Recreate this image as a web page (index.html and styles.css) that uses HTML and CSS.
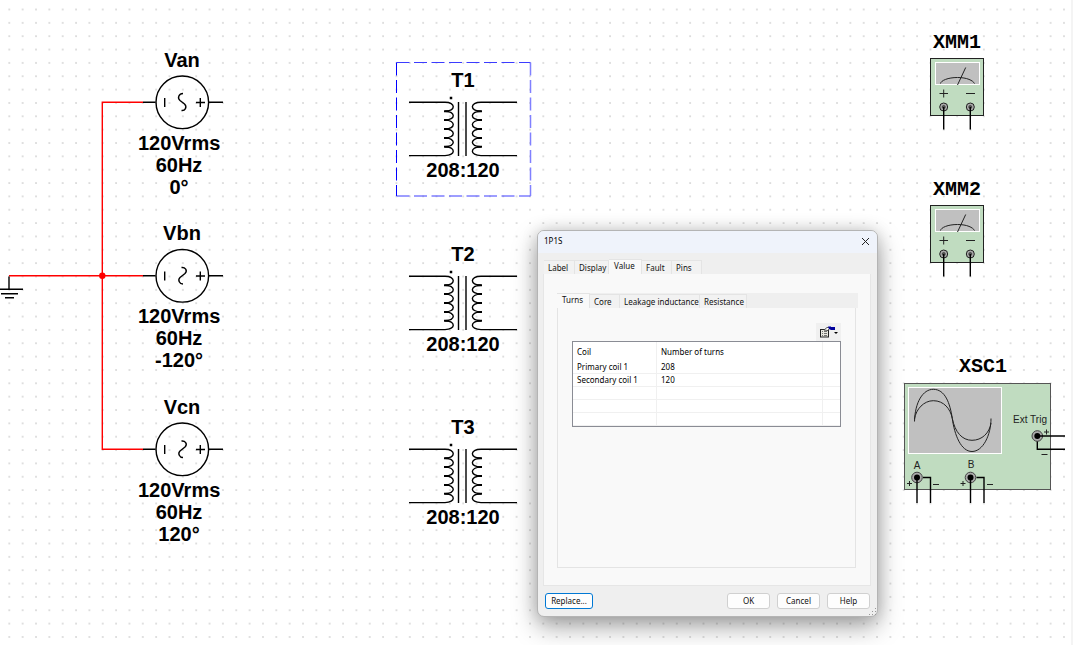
FILE: index.html
```
<!DOCTYPE html>
<html lang="en">
<head>
    <meta charset="utf-8">
    <title>Three phase transformer</title>
    <link rel="stylesheet" href="styles.css">
</head>
<body>
    <main class="sheet">
        <!-- grid dots and wires -->
        <svg class="wires" aria-hidden="true">
            <defs>
                <pattern id="grid" x="2.6" y="2.8" width="13.35" height="13.35" patternUnits="userSpaceOnUse">
                    <rect x="6.2" y="6.2" width="1" height="1" fill="#888"/>
                </pattern>
            </defs>
            <rect width="100%" height="100%" fill="url(#grid)"/>
            <g fill="none" stroke="#f00" stroke-width="1.4">
                <path d="M143 102.3H102.3V449.3H143"/>
                <path d="M9 275.8H143"/>
            </g>
            <circle cx="102.3" cy="275.8" r="3.2" fill="#f00"/>
            <path d="M9 276.5V289M0 289.3H23M1 293.8H18M5 297.8H14" fill="none" stroke="#000" stroke-width="1.4"/>
        </svg>

        <!-- AC sources -->
        <figure class="part source van">
            <figcaption>Van</figcaption>
            <svg width="88" height="61" fill="none" stroke="#000" stroke-width="1.4">
                <path d="M5 31.3H17.5M70.5 31.3H85"/>
                <circle cx="44.3" cy="31.3" r="26.3"/>
                <path d="M26.7 27V36M58 31.5H67M62.3 27V36"/>
                <path d="M45 22.5C41 22.5 39 27 42 29.5L46.5 33C49.5 36 47 40 43.5 39.5"/>
            </svg>
            <div class="values">120Vrms<br>60Hz<br>0°</div>
        </figure>
        <figure class="part source vbn">
            <figcaption>Vbn</figcaption>
            <svg width="88" height="61" fill="none" stroke="#000" stroke-width="1.4">
                <path d="M5 31.8H17.5M70.5 31.8H85"/>
                <circle cx="44.3" cy="31.8" r="26.3"/>
                <path d="M26.7 27.5V36.5M58 32H67M62.3 27.5V36.5"/>
                <path d="M43.5 23.5C47 23 50 26.5 47 29.5L42 33.5C39.5 36 41.5 40 45 40"/>
            </svg>
            <div class="values">120Vrms<br>60Hz<br>-120°</div>
        </figure>
        <figure class="part source vcn">
            <figcaption>Vcn</figcaption>
            <svg width="88" height="61" fill="none" stroke="#000" stroke-width="1.4">
                <path d="M5 31.3H17.5M70.5 31.3H85"/>
                <circle cx="44.3" cy="31.3" r="26.3"/>
                <path d="M26.7 27V36M58 31.5H67M62.3 27V36"/>
                <path d="M43.5 23C47 22.5 50 26 47 29L42 33C39.5 35.5 41.5 39.5 45 39.5"/>
            </svg>
            <div class="values">120Vrms<br>60Hz<br>120°</div>
        </figure>

        <!-- transformers -->
        <svg class="selection" width="136" height="136" fill="none" stroke-dasharray="13 4.5">
            <path d="M.5 .5V134" stroke="#00f"/>
            <path d="M.5 .5H134.5M.5 134H134.5" stroke="#3c3cff"/>
            <path d="M134.5 .5V134" stroke="#8080ff" stroke-width="1.5"/>
        </svg>
        <figure class="part transformer t1">
            <figcaption>T1</figcaption>
            <svg width="108" height="68">
                <defs>
                    <g id="coils" fill="none" stroke="#000" stroke-width="1.4">
                        <path d="M0 11.3H36C47 11.3 47 20.2 36 20.2C47 20.2 47 29.1 36 29.1C47 29.1 47 38 36 38C47 38 47 46.9 36 46.9C47 46.9 47 55.8 36 55.8C47 55.8 47 64.6 36 64.6H0"/>
                        <path d="M108 11.3H72C60.5 11.3 60.5 20.2 72 20.2C60.5 20.2 60.5 29.1 72 29.1C60.5 29.1 60.5 38 72 38C60.5 38 60.5 46.9 72 46.9C60.5 46.9 60.5 55.8 72 55.8C60.5 55.8 60.5 64.6 72 64.6H108"/>
                        <path d="M49.5 11V65M57 11V65"/>
                        <path d="M35 20.2H40M35 29.1H40M35 38H40M35 46.9H40M35 55.8H40M68 20.2H73M68 29.1H73M68 38H73M68 46.9H73M68 55.8H73" stroke-width="2"/>
                        <rect x="41" y="6" width="2" height="2" fill="#000" stroke-width=".5"/>
                    </g>
                </defs>
                <use href="#coils"/>
            </svg>
            <div>208:120</div>
        </figure>
        <figure class="part transformer t2">
            <figcaption>T2</figcaption>
            <svg width="108" height="68"><use href="#coils"/></svg>
            <div>208:120</div>
        </figure>
        <figure class="part transformer t3">
            <figcaption>T3</figcaption>
            <svg width="108" height="68"><use href="#coils"/></svg>
            <div>208:120</div>
        </figure>

        <!-- instruments -->
        <figure class="part meter xmm1">
            <figcaption>XMM1</figcaption>
            <svg width="54" height="72">
                <defs>
                    <g id="multimeter" fill="none" stroke="#222">
                        <rect x=".5" y=".5" width="53" height="57" fill="#c0dcc0"/>
                        <rect x="5.5" y="4.5" width="44" height="22" fill="#c0c0c0" stroke="#fff"/>
                        <path d="M10.5 25.5C11 22.5 18 19.5 27.5 19.5S43 22.5 44.5 25.5M27.5 27L35.7 9.5"/>
                        <path d="M9.5 35.5H18M13.7 31.5V39.5M36 35.5H45"/>
                        <circle cx="13.7" cy="49" r="4" fill="#aaa"/>
                        <circle cx="40.3" cy="49" r="4" fill="#aaa"/>
                        <circle cx="13.7" cy="49" r="1.5" fill="#555" stroke="#444"/>
                        <circle cx="40.3" cy="49" r="1.5" fill="#555" stroke="#444"/>
                        <path d="M13.7 49V71.5M40.3 49V71.5" stroke="#000" stroke-width="1.4"/>
                    </g>
                </defs>
                <use href="#multimeter"/>
            </svg>
        </figure>
        <figure class="part meter xmm2">
            <figcaption>XMM2</figcaption>
            <svg width="54" height="72"><use href="#multimeter"/></svg>
        </figure>
        <figure class="part scope">
            <figcaption>XSC1</figcaption>
            <svg width="162" height="122" fill="none" stroke="#222">
                <rect x=".5" y="1.5" width="146" height="106" fill="#c0dcc0" stroke="#555"/>
                <rect x="4.5" y="5.5" width="93" height="66" fill="#c0c0c0" stroke="#fff"/>
                <path d="M10.5 39.5C11 20 19 7.3 29.3 7.3C41 7.3 46 21 48.3 36.5C50.5 53 57 69.5 68 69.5C79 69.5 87 53 87 36.5"/>
                <path d="M10.5 37C12 27 20 18.7 29.3 18.7C40 18.7 46.5 27 48.3 36.5C51 50 58 58.3 68 58.3C78 58.3 85.5 51 87 41"/>
                <g fill="#aaa" stroke="#444">
                    <circle cx="13" cy="95.5" r="5.3"/>
                    <circle cx="66.5" cy="95.5" r="5.3"/>
                    <circle cx="133.3" cy="54" r="5.3"/>
                </g>
                <g fill="#000" stroke="none">
                    <circle cx="13" cy="95.5" r="3"/>
                    <circle cx="66.5" cy="95.5" r="3"/>
                    <circle cx="133.3" cy="54" r="3"/>
                </g>
                <path d="M13 96V121M19 95.5H26.5V121M66.5 96V121M72.5 95.5H80V121M133 54H161M133.3 59.5V67.3H161" stroke="#000" stroke-width="1.4"/>
                <path d="M3 101.5H8M5.5 99V104M29 102.5H35M56.5 101.5H61.5M59 99V104M83 102.5H89M140 50H145M142.5 47.5V52.5M137.5 72.5H143.5"/>
                <g class="pin-labels">
                    <text x="13" y="87">A</text>
                    <text x="67" y="86">B</text>
                    <text x="126" y="41">Ext Trig</text>
                </g>
            </svg>
        </figure>

        <!-- component properties -->
        <section class="dialog" role="dialog" aria-label="1P1S">
            <header class="titlebar">
                <span>1P1S</span>
                <button class="close" type="button" aria-label="Close">
                    <svg width="9" height="9" stroke="#222" fill="none"><path d="M1 1L8 8M8 1L1 8"/></svg>
                </button>
            </header>
            <div class="dialog-body">
                <div class="tabs" role="tablist">
                    <button type="button" role="tab">Label</button>
                    <button type="button" role="tab">Display</button>
                    <button class="selected" type="button" role="tab" aria-selected="true">Value</button>
                    <button type="button" role="tab">Fault</button>
                    <button type="button" role="tab">Pins</button>
                </div>
                <div class="panel">
                    <div class="tabs inner-tabs" role="tablist">
                        <button class="selected" type="button" role="tab" aria-selected="true">Turns</button>
                        <button type="button" role="tab">Core</button>
                        <button type="button" role="tab">Leakage inductance</button>
                        <button type="button" role="tab">Resistance</button>
                    </div>
                    <div class="inner-panel">
                        <button class="tool" type="button" aria-label="Properties">
                            <svg width="18" height="12">
                                <rect x=".5" y="3.5" width="8" height="7.5" fill="#e8e8e0" stroke="#222"/>
                                <path d="M2 5.5H3M4 5.5H7M2 7.5H3M4 7.5H7M2 9.5H3M4 9.5H7" stroke="#555" stroke-width=".8"/>
                                <path d="M4 4L7 1.5H10L8 4.5Z" fill="#fff" stroke="#333" stroke-width=".8"/>
                                <path d="M8 .5H11V1H15V4H11L9 3Z" fill="#00009c"/>
                                <path d="M14 6H18L16 8Z" fill="#000"/>
                            </svg>
                        </button>
                        <table class="turns">
                            <colgroup><col class="coil"><col><col class="rest"></colgroup>
                            <thead>
                                <tr><th>Coil</th><th>Number of turns</th><th></th></tr>
                            </thead>
                            <tbody>
                                <tr><td>Primary coil 1</td><td>208</td><td></td></tr>
                                <tr><td>Secondary coil 1</td><td>120</td><td></td></tr>
                                <tr><td></td><td></td><td></td></tr>
                                <tr><td></td><td></td><td></td></tr>
                                <tr><td></td><td></td><td></td></tr>
                            </tbody>
                        </table>
                    </div>
                </div>
            </div>
            <footer class="actions">
                <button class="replace" type="button">Replace...</button>
                <button type="button">OK</button>
                <button type="button">Cancel</button>
                <button type="button">Help</button>
            </footer>
            <svg class="grip" width="8" height="8" fill="#999">
                <path d="M6 0H7V1H6ZM3 3H4V4H3ZM6 3H7V4H6ZM0 6H1V7H0ZM3 6H4V7H3ZM6 6H7V7H6Z"/>
            </svg>
        </section>
    </main>
</body>
</html>
```
FILE: styles.css
```
* {
    box-sizing: border-box;
}

body {
    margin: 0;
    background-color: #fff;
    font-family: "Liberation Sans", Arial, sans-serif;
    color: #000;
}

.sheet {
    position: relative;
    min-height: 100vh;
    overflow: hidden;
    border-right: 2px solid #f4f4f4;
}

.wires {
    position: absolute;
    inset: 0;
    width: 100%;
    height: 100%;
}

/* parts placed on the schematic */
.part {
    position: absolute;
    margin: 0;
    font-size: 20px;
    font-weight: bold;
    line-height: 22px;
    text-align: center;
    white-space: nowrap;
}

.part svg {
    display: block;
}

.source {
    left: 138px;
    width: 88px;
}

.values {
    padding-right: 6px;
}

.van { top: 49px; }
.vbn { top: 222px; }
.vcn { top: 396px; }

.transformer {
    left: 409px;
    width: 108px;
}

.t1 { top: 69px; }
.t2 { top: 243px; }
.t3 { top: 416px; }

.selection {
    position: absolute;
    left: 396px;
    top: 62px;
}

.meter, .scope {
    font-family: "Liberation Mono", "Courier New", monospace;
}

.meter {
    left: 930px;
    width: 54px;
}

.xmm1 { top: 32px; }
.xmm2 { top: 179px; }

.meter svg {
    margin-top: 4px;
}

.scope {
    left: 904px;
    top: 356px;
    width: 162px;
}

.scope figcaption {
    padding-right: 4px;
}

.scope svg {
    margin-top: 4px;
}

.pin-labels {
    fill: #222;
    stroke: none;
    font: 10px "Liberation Sans", Arial, sans-serif;
    text-anchor: middle;
}

/* dialog window */
.dialog {
    position: absolute;
    left: 537px;
    top: 230px;
    width: 341px;
    border: 1px solid #b4b4b4;
    border-radius: 7px;
    background-color: #efefef;
    box-shadow: 0 10px 24px rgba(0,0,0,0.35), 0 0 16px rgba(0,0,0,0.15);
    font-family: "Noto Sans", Tahoma, sans-serif;
    font-size: 8px;
    line-height: 12px;
}

.dialog button {
    padding: 0;
    border: none;
    background: none;
    font: inherit;
    color: #111;
}

.titlebar {
    display: flex;
    justify-content: space-between;
    align-items: center;
    height: 22px;
    padding: 0 7px 2px 6px;
    border-radius: 6px 6px 0 0;
    background-color: #eff3fb;
}

.close svg {
    display: block;
}

.dialog-body {
    padding: 6px 6px 0 5px;
}

.tabs {
    display: flex;
    align-items: flex-end;
    height: 15px;
    padding-left: 1px;
}

.dialog .tabs button {
    height: 14px;
    padding: 0 0 0 4px;
    border: 1px solid #e4e4e4;
    border-width: 1px 1px 0 0;
    background-color: #f2f2f2;
    text-align: left;
    white-space: nowrap;
}

.dialog .tabs .selected {
    height: 15px;
    padding-bottom: 2px;
    padding-left: 5px;
    background-color: #f9f9f9;
}

.tabs button:nth-child(1) { width: 31px; }
.tabs button:nth-child(2) { width: 34px; }
.tabs button:nth-child(3) { width: 33px; }
.tabs button:nth-child(4) { width: 30px; }
.tabs button:nth-child(5) { width: 30px; }

.panel {
    padding: 19px 12px 17px 13px;
    border: 1px solid #e6e6e6;
    border-top: none;
    background-color: #f9f9f9;
}

.inner-tabs {
    padding-left: 0;
    background-color: #efefef;
}

.inner-tabs button:nth-child(1) { width: 33px; }
.inner-tabs button:nth-child(2) { width: 30px; }
.inner-tabs button:nth-child(3) { width: 80px; }
.inner-tabs button:nth-child(4) { width: 47px; }

.inner-panel {
    min-height: 260px;
    padding: 15px 14px;
    margin-right: 2px;
    border: 1px solid #e4e4e4;
    border-top: none;
}

.dialog .tool {
    display: flex;
    align-items: center;
    justify-content: center;
    width: 25px;
    height: 18px;
    margin-left: auto;
    background-color: #f0f0f0;
}

.turns {
    width: 100%;
    border: 1px solid #8a8c94;
    border-spacing: 0;
    table-layout: fixed;
    background-color: #fff;
}

.coil { width: 84px; }
.rest { width: 17px; }

.turns th, .turns td {
    height: 13px;
    padding: 0 4px;
    border-right: 1px solid #f0f0f0;
    border-bottom: 1px solid #f0f0f0;
    font-weight: normal;
    text-align: left;
    white-space: nowrap;
}

.turns th {
    height: 19px;
    border-bottom: none;
}

.turns th:last-child, .turns td:last-child {
    border-right: none;
}

.actions {
    display: flex;
    gap: 7px;
    padding: 7px 7px;
}

.dialog .actions button {
    width: 43px;
    height: 16px;
    border: 1px solid #d0d0d0;
    border-radius: 3px;
    background-color: #fdfdfd;
}

.dialog .actions .replace {
    width: 48px;
    margin-right: auto;
    border-color: #0078d4;
}

.grip {
    position: absolute;
    right: 0;
    bottom: 0;
}
```
